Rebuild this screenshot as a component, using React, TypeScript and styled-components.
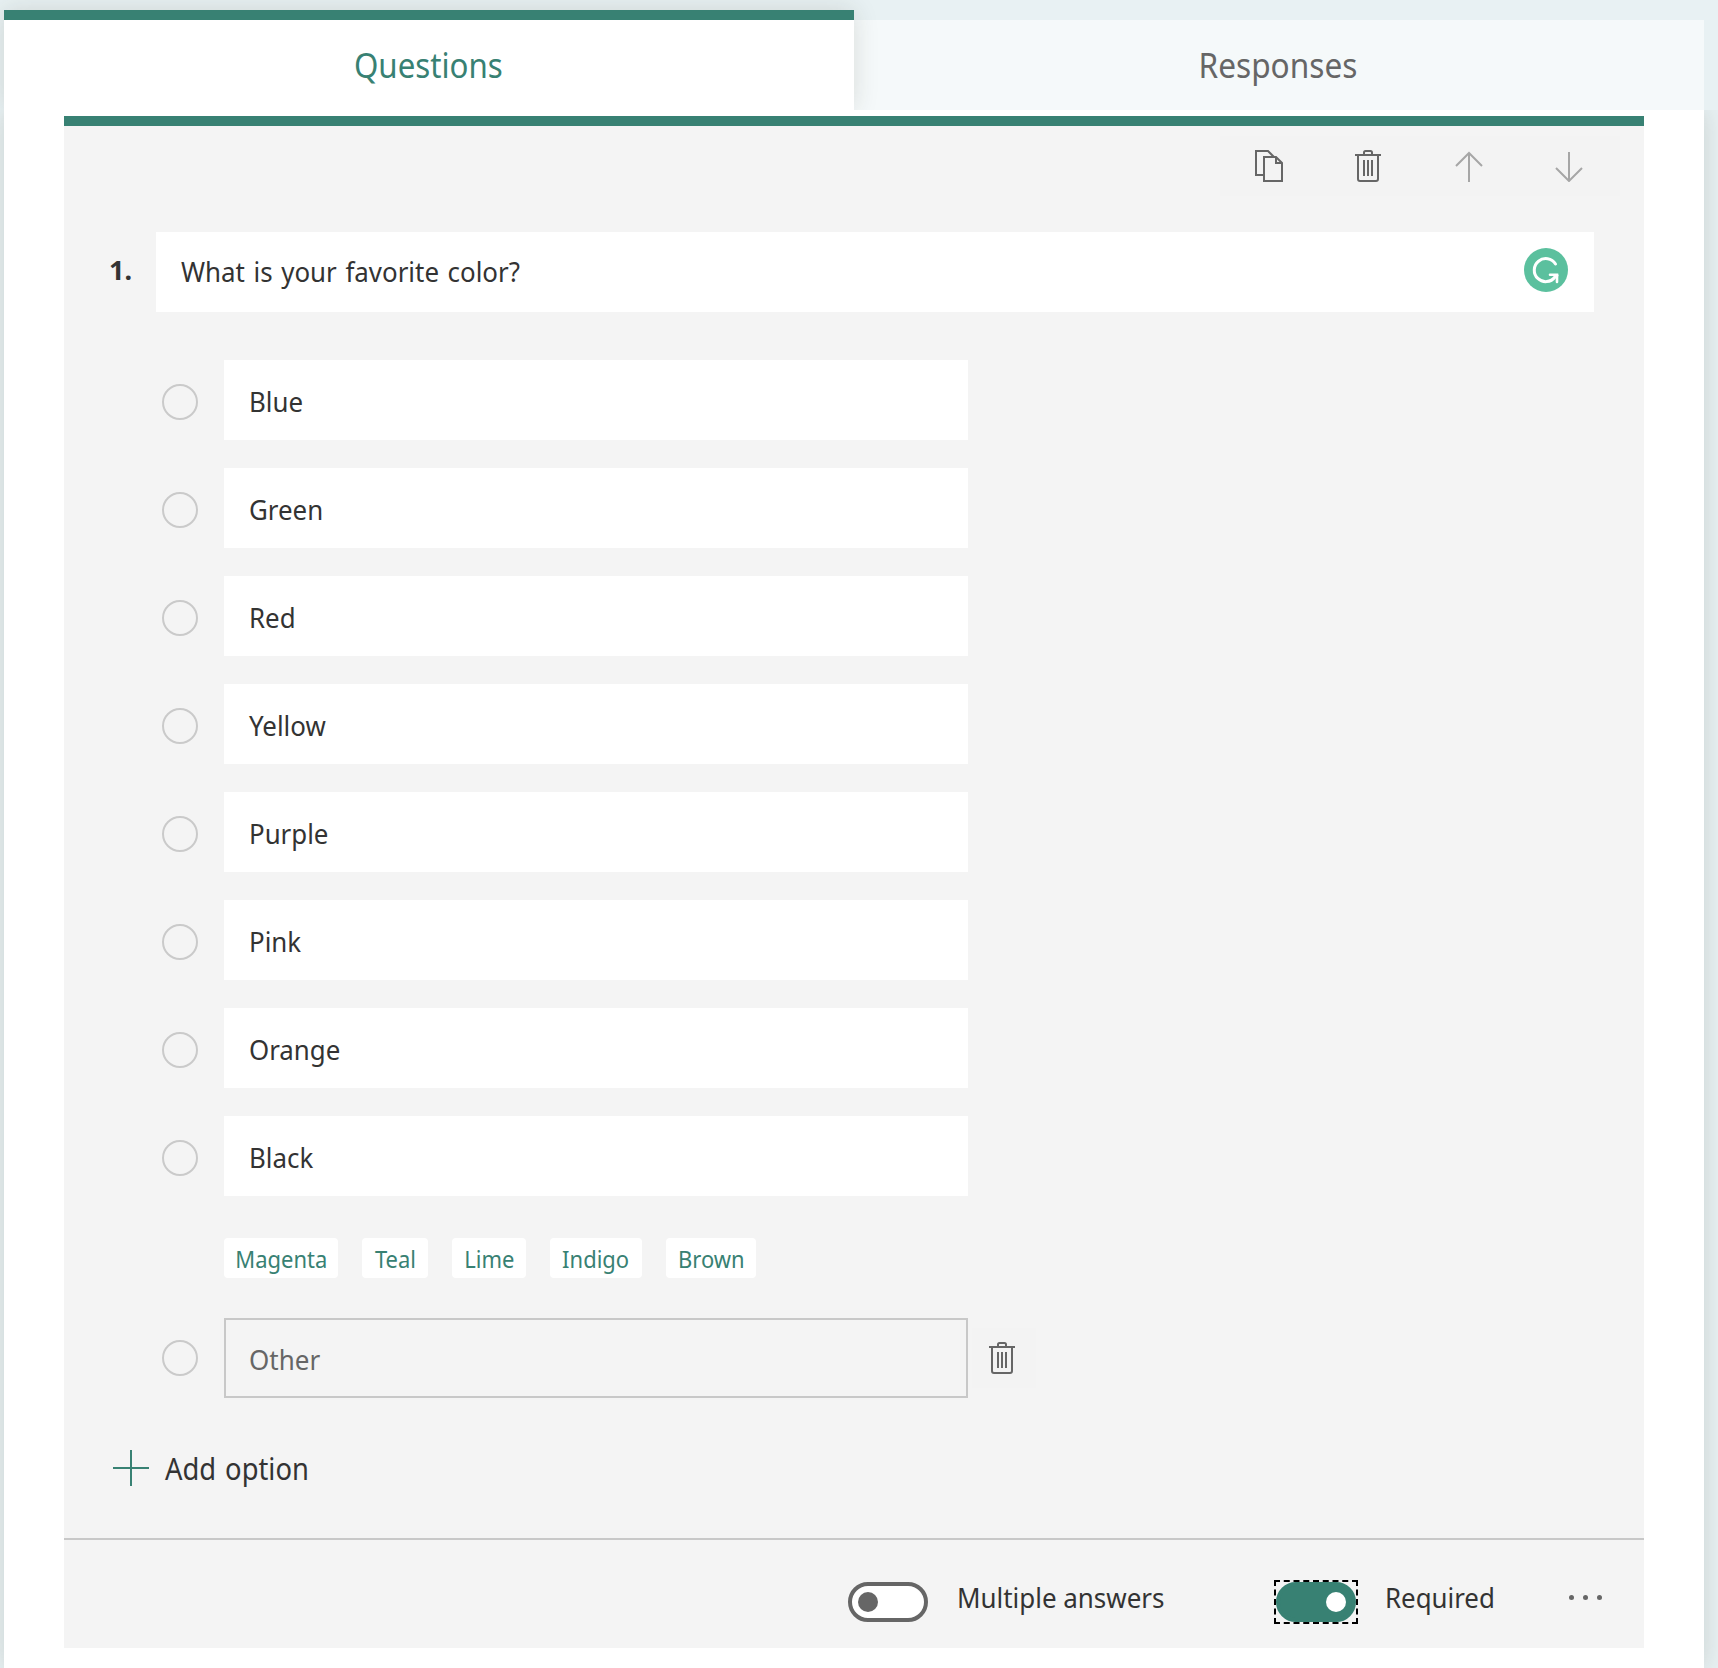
import React from "react";
import styled, { createGlobalStyle } from "styled-components";

const green = "#388173";
const ink = "#333333";
const muted = "#666666";

const GlobalStyle = createGlobalStyle`
  *, *::before, *::after { box-sizing: border-box; }
  body {
    margin: 0;
    background: #e8f1f3;
    font-family: "Noto Sans", "Open Sans", sans-serif;
    color: ${ink};
  }
  button { border: 0; background: none; padding: 0; font: inherit; color: inherit; }
  svg { display: block; }
`;

const Page = styled.div`
  width: 1718px;
  height: 1668px;
  padding: 10px 14px 0 4px;
  overflow: hidden;
  display: flex;
  flex-direction: column;
`;

const Tabs = styled.div`
  display: grid;
  grid-template-columns: 1fr 1fr;
  height: 100px;
  clip-path: inset(-10px -14px 0 -4px);
`;

const Tab = styled.button<{ $active?: boolean }>`
  display: flex;
  align-items: center;
  justify-content: center;
  padding-right: ${(p) => (p.$active ? 2 : 3)}px;
  border-top: 10px solid ${(p) => (p.$active ? green : "transparent")};
  background: ${(p) => (p.$active ? "#ffffff" : "#f5f9fa")};
  background-clip: padding-box;
  color: ${(p) => (p.$active ? green : muted)};
  box-shadow: ${(p) => (p.$active ? "0 0 24px rgba(50, 50, 30, 0.14)" : "none")};
  z-index: ${(p) => (p.$active ? 1 : 0)};
`;

const Text = styled.span<{ $size: number; $fit: number; $drop?: number; $origin?: string; $gap?: number }>`
  display: inline-block;
  font-size: ${(p) => p.$size}px;
  line-height: 40px;
  height: 40px;
  white-space: pre;
  word-spacing: ${(p) => p.$gap ?? 0}px;
  transform: translateY(${(p) => p.$drop ?? 0}px) scaleX(${(p) => p.$fit});
  transform-origin: ${(p) => p.$origin ?? "left"} center;
`;

const Sheet = styled.main`
  flex: 1;
  padding: 6px 60px 0;
  background: #ffffff;
  box-shadow: 0 0 24px rgba(50, 50, 30, 0.16);
  clip-path: inset(0 -14px 0 -4px);
`;

const Card = styled.section`
  height: 1532px;
  border-top: 10px solid ${green};
  background: #f4f4f4;
  display: flex;
  flex-direction: column;
`;

const Toolbar = styled.div`
  display: flex;
  justify-content: flex-end;
  height: 60px;
  margin: 10px 24px 0 0;
`;

const IconButton = styled.button<{ $w?: number; $nudge?: number }>`
  width: ${(p) => p.$w ?? 100}px;
  height: 60px;
  padding-right: ${(p) => p.$nudge ?? 2}px;
  background: #f3f3f3;
  display: flex;
  align-items: center;
  justify-content: center;
`;

const TitleRow = styled.div`
  display: flex;
  align-items: center;
  height: 80px;
  margin: 36px 50px 0 0;
`;

const Number = styled.div`
  width: 92px;
  padding-left: 45px;
  font-weight: 700;
`;

const TitleInput = styled.div`
  flex: 1;
  height: 80px;
  padding: 0 26px 4px 25px;
  background: #ffffff;
  display: flex;
  align-items: center;
  justify-content: space-between;
`;

const Options = styled.div`
  display: flex;
  flex-direction: column;
  gap: 28px;
  margin-top: 48px;
`;

const Option = styled.div`
  display: flex;
  align-items: center;
  height: 80px;
  padding-left: 98px;
`;

const Radio = styled.span<{ $low?: boolean }>`
  width: 36px;
  height: 36px;
  margin: ${(p) => (p.$low ? 4 : 0)}px 26px 0 0;
  border: 2px solid #cacaca;
  border-radius: 50%;
`;

const Field = styled.div<{ $outlined?: boolean }>`
  width: 744px;
  height: 80px;
  display: flex;
  align-items: center;
  padding-left: ${(p) => (p.$outlined ? 23 : 25)}px;
  border: ${(p) => (p.$outlined ? "2px solid #c8c8c8" : "0")};
  background: ${(p) => (p.$outlined ? "transparent" : "#ffffff")};
  color: ${(p) => (p.$outlined ? muted : ink)};
  margin-right: 4px;
`;

const Chips = styled.div`
  display: flex;
  gap: 24px;
  margin: 42px 0 40px 160px;
`;

const Chip = styled.button<{ $w: number }>`
  width: ${(p) => p.$w}px;
  height: 40px;
  border-radius: 4px;
  background: #ffffff;
  color: ${green};
  display: flex;
  justify-content: center;
`;

const AddOption = styled.button`
  display: flex;
  align-items: center;
  gap: 16px;
  height: 40px;
  margin: 50px 0 0 49px;
`;

const Footer = styled.footer`
  display: flex;
  align-items: center;
  height: 110px;
  margin-top: auto;
  border-top: 2px solid #c8c8c8;
  padding: 16px 42px 0 784px;
`;

const Switch = styled.span<{ $on?: boolean }>`
  flex: none;
  width: 80px;
  height: 40px;
  display: flex;
  align-items: center;
  justify-content: ${(p) => (p.$on ? "flex-end" : "flex-start")};
  padding: 0 6px;
  border: 4px solid ${(p) => (p.$on ? green : muted)};
  border-radius: 20px;
  background: ${(p) => (p.$on ? green : "#ffffff")};
  &::after {
    content: "";
    width: 20px;
    height: 20px;
    border-radius: 50%;
    background: ${(p) => (p.$on ? "#ffffff" : muted)};
  }
`;

const SwitchLabel = styled.div<{ $w: number; $pad: number }>`
  width: ${(p) => p.$w}px;
  padding-left: ${(p) => p.$pad}px;
  height: 40px;
`;

const FocusRing = styled.span`
  flex: none;
  width: 84px;
  height: 44px;
  border: 2px dashed #000000;
  display: flex;
  align-items: center;
  justify-content: center;
`;

const More = styled.button`
  display: flex;
  gap: 9px;
  margin: -9px 0 0 auto;
`;

const Dot = styled.span`
  width: 5px;
  height: 5px;
  border-radius: 50%;
  background: ${muted};
`;

const CopyIcon = () => (
  <svg width="28" height="32" viewBox="0 0 28 32" fill="none" stroke={muted} strokeWidth="2">
    <path d="M9 25H1V1H13L19 7" />
    <path d="M9 7H21L27 13V31H9Z" />
    <path d="M21 7V13H27" />
  </svg>
);

const TrashIcon = () => (
  <svg width="26" height="32" viewBox="0 0 26 32" fill="none" stroke={muted} strokeWidth="2">
    <path d="M0 5H26M9 5V2.5Q9 1 10.5 1H15.5Q17 1 17 2.5V5M3 5V29Q3 31 5 31H21Q23 31 23 29V5" />
    <path d="M9 10V26M13 10V26M17 10V26" />
  </svg>
);

const ArrowIcon = ({ down }: { down?: boolean }) => (
  <svg width="28" height="32" viewBox="0 0 28 32" fill="none" stroke="#a6a6a6" strokeWidth="2">
    {down ? <path d="M14 2V31M1 18L14 31L27 18" /> : <path d="M14 32V3M1 16L14 3L27 16" />}
  </svg>
);

const GrammarIcon = () => (
  <svg width="44" height="44" viewBox="0 0 44 44" fill="none">
    <circle cx="22" cy="22" r="22" fill="#5bc09e" />
    <path d="M31.5 16A11.5 11.5 0 1 0 31 29L33 27.5" stroke="#ffffff" strokeWidth="3" strokeLinecap="round" />
    <path d="M26 26.7H33V34" stroke="#ffffff" strokeWidth="2.6" strokeLinecap="round" />
  </svg>
);

const PlusIcon = () => (
  <svg width="36" height="36" viewBox="0 0 36 36" stroke={green} strokeWidth="2">
    <path d="M0 18H36M18 0V36" />
  </svg>
);

const colors = ["Blue", "Green", "Red", "Yellow", "Purple", "Pink", "Orange", "Black"];

const suggestions = [
  { name: "Magenta", width: 114 },
  { name: "Teal", width: 66 },
  { name: "Lime", width: 74 },
  { name: "Indigo", width: 92 },
  { name: "Brown", width: 90 },
];

export default function App() {
  return (
    <Page>
      <GlobalStyle />
      <Tabs>
        <Tab $active>
          <Text $size={35} $fit={0.893} $origin="center">Questions</Text>
        </Tab>
        <Tab>
          <Text $size={35} $fit={0.903} $origin="center">Responses</Text>
        </Tab>
      </Tabs>
      <Sheet>
        <Card>
          <Toolbar>
            <IconButton><CopyIcon /></IconButton>
            <IconButton $nudge={4}><TrashIcon /></IconButton>
            <IconButton><ArrowIcon /></IconButton>
            <IconButton><ArrowIcon down /></IconButton>
          </Toolbar>
          <TitleRow>
            <Number><Text $size={27} $fit={1} $drop={-2}>1.</Text></Number>
            <TitleInput>
              <Text $size={28} $fit={0.925} $drop={1} $gap={2}>What is your favorite color?</Text>
              <GrammarIcon />
            </TitleInput>
          </TitleRow>
          <Options>
            {colors.map((c) => (
              <Option key={c}>
                <Radio $low />
                <Field><Text $size={27.5} $fit={0.94} $drop={2}>{c}</Text></Field>
              </Option>
            ))}
          </Options>
          <Chips>
            {suggestions.map((s) => (
              <Chip key={s.name} $w={s.width}>
                <Text $size={24} $fit={0.915} $drop={1} $origin="center">{s.name}</Text>
              </Chip>
            ))}
          </Chips>
          <Option>
            <Radio />
            <Field $outlined><Text $size={27.5} $fit={0.945} $drop={2}>Other</Text></Field>
            <IconButton $w={64} $nudge={4}><TrashIcon /></IconButton>
          </Option>
          <AddOption>
            <PlusIcon />
            <Text $size={30} $fit={0.912} $drop={1} $gap={2}>Add option</Text>
          </AddOption>
          <Footer>
            <Switch />
            <SwitchLabel $w={346} $pad={29}><Text $size={27.5} $fit={0.943} $drop={-4}>Multiple answers</Text></SwitchLabel>
            <FocusRing><Switch $on /></FocusRing>
            <SwitchLabel $w={160} $pad={27}><Text $size={27.5} $fit={0.94} $drop={-4}>Required</Text></SwitchLabel>
            <More aria-label="More settings"><Dot /><Dot /><Dot /></More>
          </Footer>
        </Card>
      </Sheet>
    </Page>
  );
}
